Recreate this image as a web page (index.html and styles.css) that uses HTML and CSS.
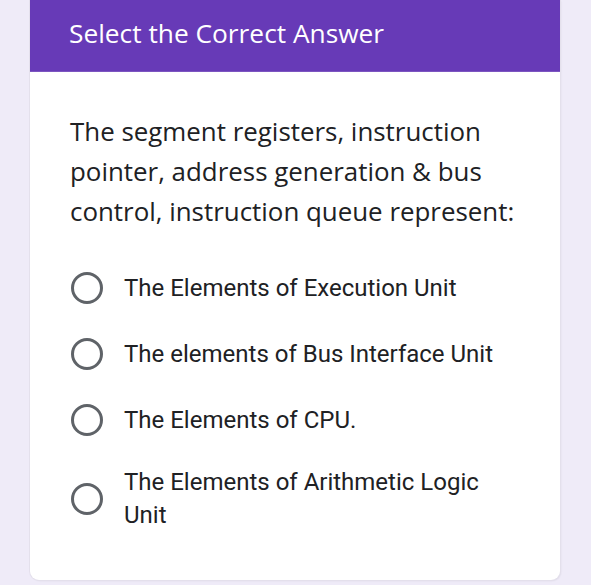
FILE: index.html
```html
<!DOCTYPE html>
<html>
<head>
<meta charset="utf-8">
<link rel="stylesheet" href="styles.css">
</head>
<body>
<div class="card">
  <div class="card-header">Select the Correct Answer</div>
  <div class="card-body">
    <p class="question">The segment registers, instruction pointer, address generation &amp; bus control, instruction queue represent:</p>
    <div class="options">
      <label class="option"><span class="radio"></span><span class="label">The Elements of Execution Unit</span></label>
      <label class="option"><span class="radio"></span><span class="label">The elements of Bus Interface Unit</span></label>
      <label class="option"><span class="radio"></span><span class="label">The Elements of CPU.</span></label>
      <label class="option"><span class="radio"></span><span class="label">The Elements of Arithmetic Logic Unit</span></label>
    </div>
  </div>
</div>
</body>
</html>
```
FILE: styles.css
```css
html, body {
  margin: 0;
  padding: 0;
  background: #efebf8;
  font-family: Roboto, "Liberation Sans", sans-serif;
  width: 591px;
  height: 585px;
  overflow: hidden;
}
.card {
  margin-left: 30px;
  width: 530px;
  height: 580px;
  background: #ffffff;
  border-radius: 0 0 9px 9px;
  box-shadow: 0 0 0 1px #e4e0ec, 1px 1px 2px rgba(0,0,0,0.08);
  overflow: hidden;
  box-sizing: border-box;
}
.card-header {
  height: 72px;
  background: #673ab7;
  color: #ffffff;
  font-family: "Open Sans", Roboto, sans-serif;
  font-size: 26.3px;
  line-height: 66px;
  padding-left: 39px;
  border-bottom: 1px solid #7c55c0;
  box-sizing: border-box;
}
.card-body {
  padding: 39px 40px 0 40px;
}
.question {
  margin: 0;
  font-family: "Open Sans", Roboto, sans-serif;
  font-size: 25.9px;
  line-height: 40px;
  color: #202124;
}
.options {
  margin-top: 24px;
  display: flex;
  flex-direction: column;
}
.option {
  display: flex;
  align-items: center;
  padding: 16.5px 0;
}
.option:last-child {
  padding-top: 12.5px;
}
.radio {
  flex: 0 0 auto;
  width: 26px;
  height: 26px;
  border: 3px solid #5f6368;
  border-radius: 50%;
  margin-left: 1px;
  margin-right: 21px;
}
.label {
  font-size: 24px;
  line-height: 33px;
  color: #202124;
  width: 380px;
}
```
